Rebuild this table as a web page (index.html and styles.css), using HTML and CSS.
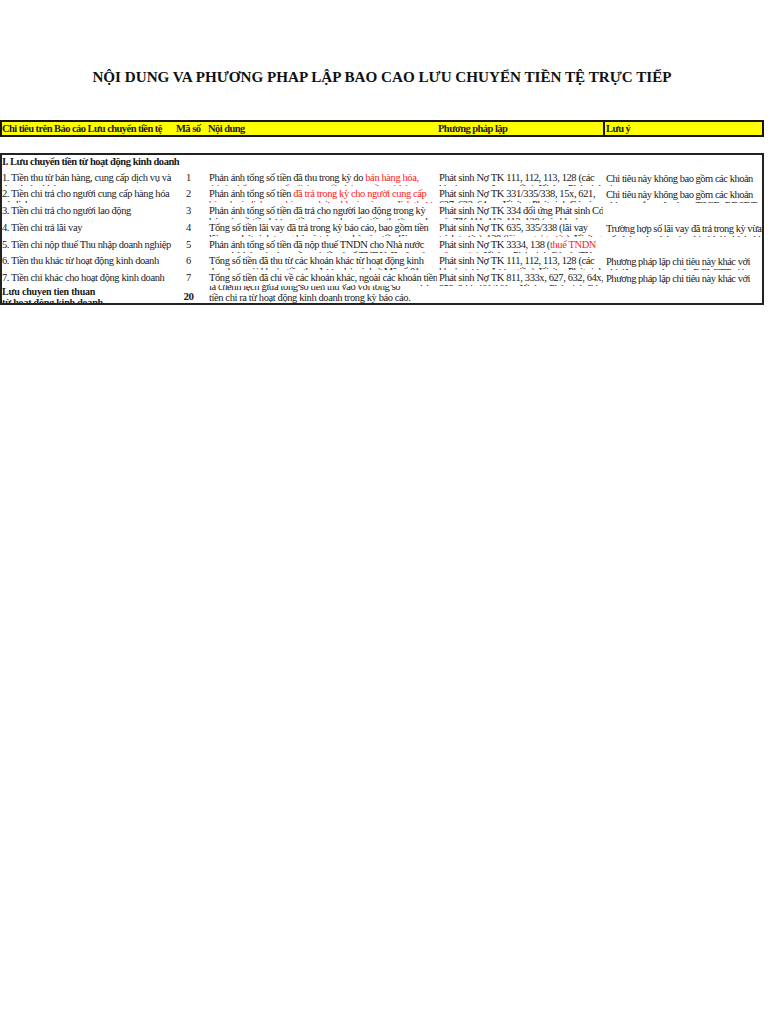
FILE: index.html
```html
<!DOCTYPE html>
<html lang="vi">
<head>
<meta charset="utf-8">
<title>Nội dung và phương pháp lập báo cáo lưu chuyển tiền tệ trực tiếp</title>
<link rel="stylesheet" href="styles.css">
</head>
<body>
<h1 class="title">NỘI DUNG VA PHƯƠNG PHAP LẬP BAO CAO LƯU CHUYỂN TIỀN TỆ TRỰC TIẾP</h1>

<div class="head">
  <div class="h1c">Chi tiêu trên Báo cáo Lưu chuyển tiền tệ</div>
  <div class="h2c">Mã số</div>
  <div class="h3c">Nội dung</div>
  <div class="h4c">Phương pháp lập</div>
  <div class="h5c">Lưu ý</div>
</div>

<div class="box">
  <div class="row r0">
    <div class="c c1 sec">I. Lưu chuyển tiền từ hoạt động kinh doanh</div>
  </div>

  <div class="row r16">
    <div class="c c1">1. Tiền thu từ bán hàng, cung cấp dịch vụ và<br>doanh thu khác</div>
    <div class="c c2">1</div>
    <div class="c c3">Phản ánh tổng số tiền đã thu trong kỳ do <span class="red">bán hàng hóa,<br>thành phẩm, cung cấp dịch vụ, tiền bản quyền, phí, hoa</span></div>
    <div class="c c4">Phát sinh Nợ TK 111, 112, 113, 128 (các<br>khoản tương đương tiền) đối ứng Phát sinh</div>
    <div class="c c5">Chi tiêu này không bao gồm các khoản<br>tiền thu từ thanh lý, nhượng bán TSCĐ</div>
  </div>

  <div class="row r17">
    <div class="c c1">2. Tiền chi trả cho người cung cấp hàng hóa<br>và dịch vụ</div>
    <div class="c c2">2</div>
    <div class="c c3">Phản ánh tổng số tiền <span class="red">đã trả trong kỳ cho người cung cấp<br>hàng hoá, dịch vụ, chi mua chứng khoán vì mục đích thương</span></div>
    <div class="c c4">Phát sinh Nợ TK 331/335/338, 15x, 621,<br>627, 632, 64x... đối ứng Phát sinh Có các</div>
    <div class="c c5">Chi tiêu này không bao gồm các khoản<br>chi mua sắm, xây dựng TSCĐ, BĐSĐT</div>
  </div>

  <div class="row r17">
    <div class="c c1">3. Tiền chi trả cho người lao động</div>
    <div class="c c2">3</div>
    <div class="c c3">Phản ánh tổng số tiền đã trả cho người lao động trong kỳ<br>báo cáo về tiền lương, tiền công, phụ cấp, tiền thưởng... do</div>
    <div class="c c4">Phát sinh Nợ TK 334 đối ứng Phát sinh Có<br>các TK 111, 112, 113, 128 (các khoản</div>
    <div class="c c5"></div>
  </div>

  <div class="row r17">
    <div class="c c1">4. Tiền chi trả lãi vay</div>
    <div class="c c2">4</div>
    <div class="c c3">Tổng số tiền lãi vay đã trả trong kỳ báo cáo, bao gồm tiền<br>lãi vay phát sinh trong kỳ và trả ngay kỳ này, tiền lãi vay</div>
    <div class="c c4">Phát sinh Nợ TK 635, 335/338 (lãi vay<br>trích trước), 138 (<span class="red">lãi vay trả trước</span>) đối ứng</div>
    <div class="c c5">Trường hợp số lãi vay đã trả trong kỳ vừa<br>vốn hóa, vừa tính vào chi phí tài chính thì</div>
  </div>

  <div class="row r16">
    <div class="c c1">5. Tiền chi nộp thuế Thu nhập doanh nghiệp</div>
    <div class="c c2">5</div>
    <div class="c c3">Phản ánh tổng số tiền đã nộp thuế TNDN cho Nhà nước<br>trong kỳ báo cáo, bao gồm cả tiền thuế TNDN đã nộp của</div>
    <div class="c c4">Phát sinh Nợ TK 3334, 138 (<span class="red">thuế TNDN<br>nộp trước</span>) đối ứng Phát sinh Có các TK</div>
    <div class="c c5"></div>
  </div>

  <div class="row r17">
    <div class="c c1">6. Tiền thu khác từ hoạt động kinh doanh</div>
    <div class="c c2">6</div>
    <div class="c c3">Tổng số tiền đã thu từ các khoản khác từ hoạt động kinh<br>doanh, ngoài khoản tiền thu được phản ánh ở Mã số 01</div>
    <div class="c c4">Phát sinh Nợ TK 111, 112, 113, 128 (các<br>khoản tương đương tiền) đối ứng Phát sinh</div>
    <div class="c c5">Phương pháp lập chi tiêu này khác với<br>chỉ tiêu tương ứng trên BCLCTT gián</div>
  </div>

  <div class="row r16">
    <div class="c c1">7. Tiền chi khác cho hoạt động kinh doanh</div>
    <div class="c c2">7</div>
    <div class="c c3">Tổng số tiền đã chi về các khoản khác, ngoài các khoản tiền<br>chi liên quan đến hoạt động sản xuất, kinh doanh trong kỳ</div>
    <div class="c c4">Phát sinh Nợ TK 811, 333x, 627, 632, 64x,<br>353, 344, 461/161... đối ứng Phát sinh Có</div>
    <div class="c c5">Phương pháp lập chi tiêu này khác với<br>chỉ tiêu tương ứng trên BCLCTT gián</div>
  </div>

  <div class="row r17">
    <div class="c c1 tot">Lưu chuyen tien thuan<br>từ hoạt động kinh doanh</div>
    <div class="c c2 num">20</div>
    <div class="c c3 bottom">là chênh lệch giữa tổng số tiền thu vào với tổng số<br>tiền chi ra từ hoạt động kinh doanh trong kỳ báo cáo.</div>
    <div class="c c4"></div>
    <div class="c c5"></div>
  </div>
</div>
</body>
</html>
```

FILE: styles.css
```css
* { box-sizing: border-box; }

body {
  margin: 0;
  background: #fff;
  color: #1a1a1a;
  font-family: "Liberation Serif", "Times New Roman", serif;
}

.title {
  width: 764px;
  margin: 0;
  padding-top: 68px;
  font-size: 15.15px;
  line-height: 17px;
  font-weight: bold;
  text-align: center;
  color: #111;
}

.head {
  margin-top: 35px;
  width: 764px;
  height: 17px;
  background: #ffff00;
  border: 2px solid #151515;
  display: grid;
  grid-template-columns: 170px 33px 232px 166px 1fr;
  font-size: 10.5px;
  font-weight: bold;
  line-height: 13px;
  letter-spacing: -0.55px;
  white-space: nowrap;
}

.head > div { overflow: hidden; }
.h1c { padding-left: 0; }
.h2c { padding-left: 4px; }
.h3c { padding-left: 3px; }
.h4c { padding-left: 1px; }
.h5c { border-left: 2px solid #151515; padding-left: 1px; }

.box {
  margin-top: 16px;
  width: 764px;
  border: 2px solid #222;
}

.row {
  display: grid;
  grid-template-columns: 170px 33px 232px 166px 1fr;
  overflow: hidden;
}

.r0 { height: 15px; }
.r16 { height: 16px; }
.r17 { height: 17px; }

.c {
  overflow: hidden;
  white-space: nowrap;
  font-size: 10.5px;
  line-height: 11px;
  letter-spacing: -0.4px;
  padding-top: 2px;
}

.c1 { padding-left: 0; }
.c2 { text-align: center; }
.c3 { padding-left: 4px; }
.c4 { padding-left: 2px; }
.c5 { padding-left: 3px; padding-top: 3px; letter-spacing: -0.48px; }

.sec {
  grid-column: 1 / -1;
  font-weight: bold;
  font-size: 10.5px;
  letter-spacing: -0.45px;
  padding-top: 1px;
}

.tot {
  font-weight: bold;
  font-size: 10px;
  letter-spacing: -0.2px;
  padding-top: 0;
}

.num {
  font-weight: bold;
  font-size: 11px;
  padding-top: 5px;
}

.bottom {
  display: flex;
  flex-direction: column;
  justify-content: flex-end;
  padding-top: 0;
  padding-bottom: 0;
}

.red { color: #ff1a1a; }
```
